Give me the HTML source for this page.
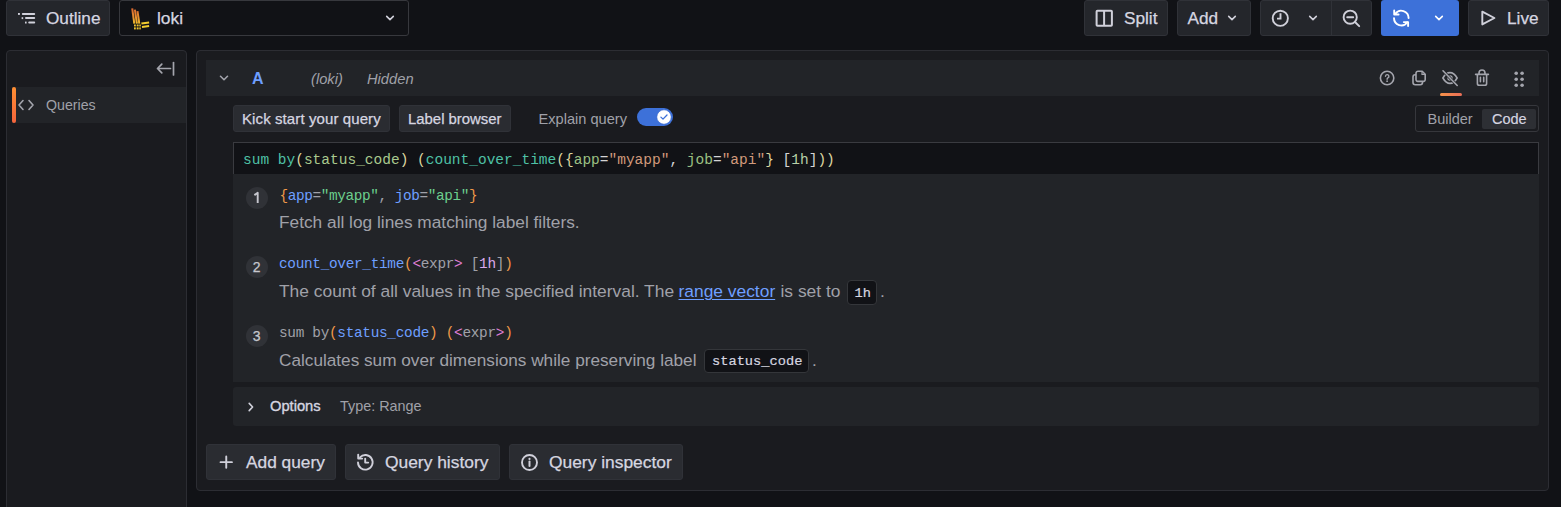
<!DOCTYPE html>
<html><head><meta charset="utf-8"><title>Explore</title><style>
html,body{margin:0;padding:0;}
body{width:1561px;height:507px;overflow:hidden;background:#111216;position:relative;font-family:'Liberation Sans', sans-serif;}
.t{position:absolute;white-space:pre;}
.r{position:absolute;}
</style></head><body>
<div class="r" style="left:6px;top:0px;width:104px;height:36px;background:#24262b;border:1px solid #303238;border-radius:3px;box-sizing:border-box;"></div>
<svg class="r" style="left:18px;top:12px;" width="18" height="12" viewBox="0 0 18 12" fill="none"><g stroke="#d0d0da" stroke-width="2" stroke-linecap="round"><path d="M4.8 2H16.2M8 6.1H16.2M11.2 10.5H16.2"/></g><g fill="#d0d0da"><rect x="0" y="1" width="1.9" height="1.9"/><rect x="3.6" y="5.2" width="1.6" height="1.9"/><rect x="7" y="9.6" width="1.6" height="1.9"/></g></svg>
<div class="t" style="left:46px;top:8px;font-family:'Liberation Sans', sans-serif;font-size:17.2px;line-height:20px;font-weight:400;font-style:normal;color:#d6d6e0;letter-spacing:0px;-webkit-text-stroke:0.25px currentColor;">Outline</div>
<div class="r" style="left:119px;top:0px;width:290px;height:36px;background:#111216;border:1px solid #37383d;border-radius:3px;box-sizing:border-box;"></div>
<svg class="r" style="left:128px;top:5px;" width="24" height="28" viewBox="0 0 24 28" fill="none"><defs><linearGradient id="lg" gradientUnits="userSpaceOnUse" x1="0" y1="3" x2="0" y2="19"><stop offset="0" stop-color="#d9652f"/><stop offset="0.6" stop-color="#e8912f"/><stop offset="1" stop-color="#f3c02b"/></linearGradient></defs><g stroke="url(#lg)" stroke-width="2"><path d="M4.2 3.4L6.3 18.6"/><path d="M6.9 4.6L8.9 18.6"/><path d="M9.5 6.1L11.3 18.6"/></g><g fill="#f2c52c"><rect x="6" y="19.5" width="1.8" height="1.9"/><rect x="8.7" y="19.5" width="1.9" height="1.9"/><rect x="11.3" y="19.5" width="1.5" height="1.9"/><rect x="6" y="22.4" width="1.8" height="2"/><rect x="8.7" y="22.4" width="1.9" height="2"/><rect x="11.3" y="22.4" width="1.5" height="2"/></g><g stroke="#f3cd2e" stroke-width="2"><path d="M13.4 18.6L21.1 17.6"/><path d="M14 21.9L21.1 20.9"/></g></svg>
<div class="t" style="left:157px;top:8px;font-family:'Liberation Sans', sans-serif;font-size:17.4px;line-height:20px;font-weight:400;font-style:normal;color:#d6d6e0;letter-spacing:0px;-webkit-text-stroke:0.25px currentColor;">loki</div>
<svg class="r" style="left:384px;top:14px;" width="12" height="8" viewBox="0 0 12 8" fill="none"><path d="M2.7 2.4L6 5.6L9.3 2.4" stroke="#d0d0da" stroke-width="1.6" stroke-linecap="round" stroke-linejoin="round"/></svg>
<div class="r" style="left:1084px;top:0px;width:84px;height:36px;background:#24262b;border:1px solid #303238;border-radius:3px;box-sizing:border-box;"></div>
<svg class="r" style="left:1095px;top:9px;" width="19" height="19" viewBox="0 0 19 19" fill="none"><rect x="1.6" y="1.8" width="15.3" height="15" rx="0.8" stroke="#d0d0da" stroke-width="2"/><path d="M9.1 1.8V16.8" stroke="#d0d0da" stroke-width="2"/></svg>
<div class="t" style="left:1124px;top:8px;font-family:'Liberation Sans', sans-serif;font-size:17.2px;line-height:20px;font-weight:400;font-style:normal;color:#d6d6e0;letter-spacing:0px;-webkit-text-stroke:0.25px currentColor;">Split</div>
<div class="r" style="left:1177px;top:0px;width:74px;height:36px;background:#24262b;border:1px solid #303238;border-radius:3px;box-sizing:border-box;"></div>
<div class="t" style="left:1187.5px;top:8px;font-family:'Liberation Sans', sans-serif;font-size:17.2px;line-height:20px;font-weight:400;font-style:normal;color:#d6d6e0;letter-spacing:0px;-webkit-text-stroke:0.25px currentColor;">Add</div>
<svg class="r" style="left:1226px;top:14px;" width="12" height="8" viewBox="0 0 12 8" fill="none"><path d="M2.7 2.4L6 5.6L9.3 2.4" stroke="#d0d0da" stroke-width="1.6" stroke-linecap="round" stroke-linejoin="round"/></svg>
<div class="r" style="left:1260px;top:0px;width:112px;height:36px;background:#24262b;border:1px solid #303238;border-radius:3px;box-sizing:border-box;"></div>
<div class="r" style="left:1331px;top:0px;width:1px;height:36px;background:#303238;border-radius:0px;box-sizing:border-box;"></div>
<svg class="r" style="left:1271px;top:9px;" width="19" height="19" viewBox="0 0 19 19" fill="none"><circle cx="9.3" cy="9.3" r="7.6" stroke="#d0d0da" stroke-width="1.9"/><path d="M9.5 4.3V9.6H6" stroke="#d0d0da" stroke-width="1.9" stroke-linejoin="miter"/></svg>
<svg class="r" style="left:1307px;top:14px;" width="12" height="8" viewBox="0 0 12 8" fill="none"><path d="M2.7 2.4L6 5.6L9.3 2.4" stroke="#d0d0da" stroke-width="1.6" stroke-linecap="round" stroke-linejoin="round"/></svg>
<svg class="r" style="left:1342px;top:9px;" width="19" height="19" viewBox="0 0 19 19" fill="none"><circle cx="8.2" cy="8.2" r="6.6" stroke="#d0d0da" stroke-width="1.9"/><path d="M5.2 8.2H11.2M13 13L17.2 17.2" stroke="#d0d0da" stroke-width="1.9" stroke-linecap="round"/></svg>
<div class="r" style="left:1381px;top:0px;width:78px;height:36px;background:#3d71d9;border-radius:3px;box-sizing:border-box;"></div>
<svg class="r" style="left:1391px;top:8px;" width="20" height="20" viewBox="0 0 20 20" fill="none"><path d="M4.3 5.9A7.3 7.3 0 0 1 17.6 10.1M3 10.1A7.3 7.3 0 0 0 16.3 14.3" stroke="#fff" stroke-width="1.9" stroke-linecap="round"/><path d="M3.2 2.4V6.5H7.6M12.8 14.1H17.1V18" stroke="#fff" stroke-width="1.9" stroke-linecap="round" stroke-linejoin="round"/></svg>
<svg class="r" style="left:1433px;top:14px;" width="12" height="8" viewBox="0 0 12 8" fill="none"><path d="M2.7 2.4L6 5.6L9.3 2.4" stroke="#ffffff" stroke-width="1.6" stroke-linecap="round" stroke-linejoin="round"/></svg>
<div class="r" style="left:1468px;top:0px;width:81px;height:36px;background:#24262b;border:1px solid #303238;border-radius:3px;box-sizing:border-box;"></div>
<svg class="r" style="left:1480px;top:9px;" width="17" height="18" viewBox="0 0 17 18" fill="none"><path d="M2.3 2.6L14.4 9L2.3 15.4Z" stroke="#d0d0da" stroke-width="1.9" stroke-linejoin="round"/></svg>
<div class="t" style="left:1507px;top:8px;font-family:'Liberation Sans', sans-serif;font-size:17.2px;line-height:20px;font-weight:400;font-style:normal;color:#d6d6e0;letter-spacing:0px;-webkit-text-stroke:0.25px currentColor;">Live</div>
<div class="r" style="left:6px;top:50px;width:181px;height:480px;background:#1a1b1f;border:1px solid #2c2d33;border-radius:4px;box-sizing:border-box;"></div>
<svg class="r" style="left:155px;top:61px;" width="21" height="16" viewBox="0 0 21 16" fill="none"><path d="M2.5 7.5H15.5M6.8 3.2L2.5 7.5L6.8 11.8" stroke="#a4a5ad" stroke-width="1.7" stroke-linecap="round" stroke-linejoin="round"/><path d="M18.5 1.5V14" stroke="#a4a5ad" stroke-width="1.7" stroke-linecap="round"/></svg>
<div class="r" style="left:12px;top:87px;width:174px;height:36px;background:#222428;border-radius:0px;box-sizing:border-box;"></div>
<div class="r" style="left:12px;top:87px;width:4px;height:36px;background:linear-gradient(#ff8f33,#f4643c);border-radius:2px;box-sizing:border-box;"></div>
<svg class="r" style="left:17px;top:99px;" width="18" height="12" viewBox="0 0 18 12" fill="none"><path d="M6 1.5L2 6L6 10.5M12 1.5L16 6L12 10.5" stroke="#a4a5ad" stroke-width="1.6" stroke-linecap="round" stroke-linejoin="round"/></svg>
<div class="t" style="left:46px;top:97px;font-family:'Liberation Sans', sans-serif;font-size:14.2px;line-height:16px;font-weight:400;font-style:normal;color:#a0a1a9;letter-spacing:0px;">Queries</div>
<div class="r" style="left:196px;top:50px;width:1353px;height:441px;background:#1a1b1f;border:1px solid #2c2d33;border-radius:4px;box-sizing:border-box;"></div>
<div class="r" style="left:206px;top:60px;width:1333px;height:36px;background:#222428;border-radius:0px;box-sizing:border-box;"></div>
<svg class="r" style="left:218px;top:74px;" width="12" height="9" viewBox="0 0 12 9" fill="none"><path d="M2.5 2.3L6 5.7L9.5 2.3" stroke="#a4a5ad" stroke-width="1.6" stroke-linecap="round" stroke-linejoin="round"/></svg>
<div class="t" style="left:252px;top:70px;font-family:'Liberation Sans', sans-serif;font-size:16px;line-height:17px;font-weight:700;font-style:normal;color:#6e9fff;letter-spacing:0px;">A</div>
<div class="t" style="left:311px;top:71px;font-family:'Liberation Sans', sans-serif;font-size:14.7px;line-height:16px;font-weight:400;font-style:italic;color:#a0a1a9;letter-spacing:0px;">(loki)</div>
<div class="t" style="left:367px;top:71px;font-family:'Liberation Sans', sans-serif;font-size:14.7px;line-height:16px;font-weight:400;font-style:italic;color:#a0a1a9;letter-spacing:0px;">Hidden</div>
<svg class="r" style="left:1378px;top:70px;" width="18" height="18" viewBox="0 0 18 18" fill="none"><circle cx="9.1" cy="8" r="6.7" stroke="#a4a5ad" stroke-width="1.6"/><path d="M7.5 6.3A1.7 1.7 0 1 1 9.9 7.9C9.4 8.2 9.1 8.5 9.1 9.2" stroke="#a4a5ad" stroke-width="1.4" stroke-linecap="round"/><circle cx="9.1" cy="11.2" r="0.9" fill="#a4a5ad"/></svg>
<svg class="r" style="left:1410px;top:69px;" width="18" height="18" viewBox="0 0 18 18" fill="none"><rect x="3" y="5.8" width="9.5" height="10" rx="2.2" stroke="#a4a5ad" stroke-width="1.6"/><path d="M8 2.2H12.2L15.2 5.2V10.6A1.8 1.8 0 0 1 13.4 12.4H7.8A1.8 1.8 0 0 1 6 10.6V4.2A2 2 0 0 1 8 2.2Z" fill="#222428" stroke="#a4a5ad" stroke-width="1.6" stroke-linejoin="round"/><path d="M12 2.4V5.4H15" stroke="#a4a5ad" stroke-width="1.2"/></svg>
<svg class="r" style="left:1441px;top:69px;" width="18" height="18" viewBox="0 0 18 18" fill="none"><path d="M1.9 9C3.9 5.4 6.4 3.6 9 3.6S14.1 5.4 16.1 9C14.1 12.6 11.6 14.4 9 14.4S3.9 12.6 1.9 9Z" stroke="#a4a5ad" stroke-width="1.6"/><circle cx="9" cy="9" r="2" stroke="#a4a5ad" stroke-width="1.4"/><path d="M2 1.8L16.2 16.5" stroke="#222428" stroke-width="2.8"/><path d="M2 1.8L16.2 16.5" stroke="#a4a5ad" stroke-width="1.6" stroke-linecap="round"/></svg>
<div class="r" style="left:1440px;top:93px;width:22px;height:3px;background:linear-gradient(90deg,#f5924a,#ea6e57);border-radius:2px;box-sizing:border-box;"></div>
<svg class="r" style="left:1474px;top:69px;" width="16" height="18" viewBox="0 0 16 18" fill="none"><path d="M1.6 5.4H14.4" stroke="#a4a5ad" stroke-width="1.6" stroke-linecap="round"/><path d="M5 5.2V4A3 3 0 0 1 11 4V5.2" stroke="#a4a5ad" stroke-width="1.6"/><path d="M3.4 5.4V14.4A1.8 1.8 0 0 0 5.2 16.2H10.8A1.8 1.8 0 0 0 12.6 14.4V5.4" stroke="#a4a5ad" stroke-width="1.6"/><path d="M6.4 8.2V12.8M9.7 8.2V12.8" stroke="#a4a5ad" stroke-width="1.6" stroke-linecap="round"/></svg>
<svg class="r" style="left:1512px;top:70px;" width="14" height="18" viewBox="0 0 14 18" fill="none"><g fill="#a4a5ad"><circle cx="4.2" cy="3.2" r="1.8"/><circle cx="10.1" cy="3.2" r="1.8"/><circle cx="4.2" cy="9.3" r="1.8"/><circle cx="10.1" cy="9.3" r="1.8"/><circle cx="4.2" cy="15.3" r="1.8"/><circle cx="10.1" cy="15.3" r="1.8"/></g></svg>
<div class="r" style="left:233px;top:105px;width:157px;height:27px;background:#2a2c31;border:1px solid #303238;border-radius:3px;box-sizing:border-box;"></div>
<div class="t" style="left:242px;top:110px;font-family:'Liberation Sans', sans-serif;font-size:15px;line-height:17px;font-weight:400;font-style:normal;color:#d6d6e0;letter-spacing:0.1px;-webkit-text-stroke:0.25px currentColor;">Kick start your query</div>
<div class="r" style="left:399px;top:105px;width:112px;height:27px;background:#2a2c31;border:1px solid #303238;border-radius:3px;box-sizing:border-box;"></div>
<div class="t" style="left:408px;top:111px;font-family:'Liberation Sans', sans-serif;font-size:14.9px;line-height:16px;font-weight:400;font-style:normal;color:#d6d6e0;letter-spacing:0px;-webkit-text-stroke:0.25px currentColor;">Label browser</div>
<div class="t" style="left:538.5px;top:111px;font-family:'Liberation Sans', sans-serif;font-size:14.6px;line-height:16px;font-weight:400;font-style:normal;color:#a0a1a9;letter-spacing:0px;">Explain query</div>
<div class="r" style="left:637px;top:108px;width:36px;height:18px;background:#3d71d9;border-radius:9px;box-sizing:border-box;"></div>
<svg class="r" style="left:655px;top:109px;" width="18" height="16" viewBox="0 0 18 16" fill="none"><circle cx="9" cy="8" r="7.2" fill="#fff" stroke="#3567cc" stroke-width="0.6"/><path d="M5.9 8.1L8 10.1L12 6" stroke="#3d71d9" stroke-width="1.3" stroke-linecap="round" stroke-linejoin="round"/></svg>
<div class="r" style="left:1415px;top:105px;width:124px;height:27px;background:transparent;border:1px solid #36373c;border-radius:3px;box-sizing:border-box;"></div>
<div class="r" style="left:1482px;top:109px;width:54px;height:20px;background:#2d2f34;border-radius:2px;box-sizing:border-box;"></div>
<div class="t" style="left:1427.5px;top:111px;font-family:'Liberation Sans', sans-serif;font-size:14.5px;line-height:16px;font-weight:400;font-style:normal;color:#a0a1a9;letter-spacing:0px;">Builder</div>
<div class="t" style="left:1492px;top:111px;font-family:'Liberation Sans', sans-serif;font-size:14.5px;line-height:16px;font-weight:400;font-style:normal;color:#d6d6e0;letter-spacing:0px;-webkit-text-stroke:0.15px currentColor;">Code</div>
<div class="r" style="left:233px;top:142px;width:1306px;height:33px;background:#111216;border:1px solid #3a3b40;border-radius:0px;box-sizing:border-box;"></div>
<div class="t" style="left:243px;top:152px;font-family:'Liberation Mono', monospace;font-size:14.5px;line-height:16px;font-weight:400;font-style:normal;color:#d6d6e0;letter-spacing:0px;"><span style="color:#4fc1a6">sum by</span><span style="color:#dcd6a0">(</span><span style="color:#a9c98e">status_code</span><span style="color:#dcd6a0">)</span> <span style="color:#dcd6a0">(</span><span style="color:#4fc1a6">count_over_time</span><span style="color:#dcd6a0">(</span><span style="color:#dcd6a0">{</span><span style="color:#9cc083">app</span><span style="color:#d4d4d4">=</span><span style="color:#d29a7c">"myapp"</span><span style="color:#d4d4d4">, </span><span style="color:#9cc083">job</span><span style="color:#d4d4d4">=</span><span style="color:#d29a7c">"api"</span><span style="color:#dcd6a0">}</span> <span style="color:#d4d4d4">[</span><span style="color:#b8d0a8">1h</span><span style="color:#d4d4d4">]</span><span style="color:#dcd6a0">))</span></div>
<div class="r" style="left:233px;top:174px;width:1306px;height:208px;background:#222428;border-radius:0px;box-sizing:border-box;"></div>
<div class="r" style="left:246px;top:187px;width:22px;height:22px;background:#303237;border-radius:11px;box-sizing:border-box;"></div>
<svg class="r" style="left:250px;top:190px;" width="12" height="16" viewBox="0 0 12 16" fill="none"><path d="M4.4 5.1L7.7 2.8V13.1" stroke="#c6c7ce" stroke-width="1.9" stroke-linejoin="round"/></svg>
<div class="t" style="left:279.5px;top:187.5px;font-family:'Liberation Mono', monospace;font-size:14.4px;line-height:16px;font-weight:400;font-style:normal;color:#d6d6e0;letter-spacing:-0.4px;"><span style="color:#f0994a">{</span><span style="color:#6e9fff">app</span><span style="color:#a0a1a9">=</span><span style="color:#6ccf8e">"myapp"</span><span style="color:#a0a1a9">, </span><span style="color:#6e9fff">job</span><span style="color:#a0a1a9">=</span><span style="color:#6ccf8e">"api"</span><span style="color:#f0994a">}</span></div>
<div class="t" style="left:279px;top:212px;font-family:'Liberation Sans', sans-serif;font-size:17.3px;line-height:20px;font-weight:400;font-style:normal;color:#a0a1a9;letter-spacing:0px;">Fetch all log lines matching label filters.</div>
<div class="r" style="left:246px;top:256px;width:22px;height:22px;background:#303237;border-radius:11px;box-sizing:border-box;"></div>
<div class="t" style="left:252.8px;top:259px;font-family:'Liberation Sans', sans-serif;font-size:14px;line-height:16px;font-weight:400;font-style:normal;color:#c6c7ce;letter-spacing:0px;-webkit-text-stroke:0.25px currentColor;">2</div>
<div class="t" style="left:279px;top:256.3px;font-family:'Liberation Mono', monospace;font-size:14.4px;line-height:16px;font-weight:400;font-style:normal;color:#d6d6e0;letter-spacing:-0.3px;"><span style="color:#6e9fff">count_over_time</span><span style="color:#f0994a">(</span><span style="color:#e07fd8">&lt;</span><span style="color:#a0a1a9">expr</span><span style="color:#e07fd8">&gt;</span> <span style="color:#a0a1a9">[</span><span style="color:#dca8ee">1h</span><span style="color:#a0a1a9">]</span><span style="color:#f0994a">)</span></div>
<div class="t" style="left:279px;top:280.8px;font-family:'Liberation Sans', sans-serif;font-size:17.4px;line-height:20px;font-weight:400;font-style:normal;color:#a0a1a9;letter-spacing:0px;">The count of all values in the specified interval. The</div>
<div class="t" style="left:678.5px;top:280.8px;font-family:'Liberation Sans', sans-serif;font-size:17.4px;line-height:20px;font-weight:400;font-style:normal;color:#6e9fff;letter-spacing:0px;text-decoration:underline;text-underline-offset:2px;text-decoration-thickness:1px">range vector</div>
<div class="t" style="left:780.5px;top:280.8px;font-family:'Liberation Sans', sans-serif;font-size:17.4px;line-height:20px;font-weight:400;font-style:normal;color:#a0a1a9;letter-spacing:0px;">is set to</div>
<div class="r" style="left:847px;top:280px;width:30px;height:25px;background:#111216;border:1px solid #34363a;border-radius:4px;box-sizing:border-box;"></div>
<div class="t" style="left:854.5px;top:285.5px;font-family:'Liberation Mono', monospace;font-size:13.7px;line-height:15px;font-weight:400;font-style:normal;color:#d6d6e0;letter-spacing:0px;-webkit-text-stroke:0.2px currentColor;">1h</div>
<div class="t" style="left:880px;top:280.8px;font-family:'Liberation Sans', sans-serif;font-size:17.4px;line-height:20px;font-weight:400;font-style:normal;color:#a0a1a9;letter-spacing:0px;">.</div>
<div class="r" style="left:246px;top:325px;width:22px;height:22px;background:#303237;border-radius:11px;box-sizing:border-box;"></div>
<div class="t" style="left:252.8px;top:328px;font-family:'Liberation Sans', sans-serif;font-size:14px;line-height:16px;font-weight:400;font-style:normal;color:#c6c7ce;letter-spacing:0px;-webkit-text-stroke:0.25px currentColor;">3</div>
<div class="t" style="left:279px;top:325.3px;font-family:'Liberation Mono', monospace;font-size:14.4px;line-height:16px;font-weight:400;font-style:normal;color:#d6d6e0;letter-spacing:-0.3px;"><span style="color:#a0a1a9">sum by</span><span style="color:#f0994a">(</span><span style="color:#6e9fff">status_code</span><span style="color:#f0994a">)</span> <span style="color:#f0994a">(</span><span style="color:#e07fd8">&lt;</span><span style="color:#a0a1a9">expr</span><span style="color:#e07fd8">&gt;</span><span style="color:#f0994a">)</span></div>
<div class="t" style="left:279px;top:349.8px;font-family:'Liberation Sans', sans-serif;font-size:17.2px;line-height:20px;font-weight:400;font-style:normal;color:#a0a1a9;letter-spacing:0px;">Calculates sum over dimensions while preserving label</div>
<div class="r" style="left:704px;top:349px;width:105px;height:24px;background:#111216;border:1px solid #34363a;border-radius:4px;box-sizing:border-box;"></div>
<div class="t" style="left:712px;top:354px;font-family:'Liberation Mono', monospace;font-size:13.7px;line-height:15px;font-weight:400;font-style:normal;color:#d6d6e0;letter-spacing:0px;-webkit-text-stroke:0.2px currentColor;">status_code</div>
<div class="t" style="left:812px;top:349.8px;font-family:'Liberation Sans', sans-serif;font-size:17.2px;line-height:20px;font-weight:400;font-style:normal;color:#a0a1a9;letter-spacing:0px;">.</div>
<div class="r" style="left:233px;top:387px;width:1306px;height:39px;background:#222428;border-radius:3px;box-sizing:border-box;"></div>
<svg class="r" style="left:246px;top:401px;" width="10" height="12" viewBox="0 0 10 12" fill="none"><path d="M3.2 2.4L6.6 6L3.2 9.6" stroke="#d0d0da" stroke-width="1.6" stroke-linecap="round" stroke-linejoin="round"/></svg>
<div class="t" style="left:270px;top:397.9px;font-family:'Liberation Sans', sans-serif;font-size:14.7px;line-height:16px;font-weight:400;font-style:normal;color:#d6d6e0;letter-spacing:0px;-webkit-text-stroke:0.35px currentColor;">Options</div>
<div class="t" style="left:340px;top:397.9px;font-family:'Liberation Sans', sans-serif;font-size:14.4px;line-height:16px;font-weight:400;font-style:normal;color:#a0a1a9;letter-spacing:0px;">Type: Range</div>
<div class="r" style="left:206px;top:444px;width:130px;height:36px;background:#2a2c31;border:1px solid #303238;border-radius:3px;box-sizing:border-box;"></div>
<svg class="r" style="left:218px;top:455px;" width="16" height="16" viewBox="0 0 16 16" fill="none"><path d="M8.25 1.45V12.85M2.55 7.15H13.95" stroke="#d0d0da" stroke-width="1.9" stroke-linecap="round"/></svg>
<div class="t" style="left:246px;top:452px;font-family:'Liberation Sans', sans-serif;font-size:17.3px;line-height:20px;font-weight:400;font-style:normal;color:#d6d6e0;letter-spacing:0px;-webkit-text-stroke:0.25px currentColor;">Add query</div>
<div class="r" style="left:345px;top:444px;width:155px;height:36px;background:#2a2c31;border:1px solid #303238;border-radius:3px;box-sizing:border-box;"></div>
<svg class="r" style="left:355px;top:452px;" width="20" height="20" viewBox="0 0 20 20" fill="none"><path d="M5 5.3A7.3 7.3 0 1 1 3 10.4" stroke="#d0d0da" stroke-width="1.9" stroke-linecap="round"/><path d="M3.2 2.6V6.6H7.2" stroke="#d0d0da" stroke-width="1.9" stroke-linecap="round" stroke-linejoin="round"/><path d="M10.2 6.6V10.6H13.2" stroke="#d0d0da" stroke-width="1.9" stroke-linecap="round" stroke-linejoin="round"/></svg>
<div class="t" style="left:385px;top:452px;font-family:'Liberation Sans', sans-serif;font-size:17.4px;line-height:20px;font-weight:400;font-style:normal;color:#d6d6e0;letter-spacing:0px;-webkit-text-stroke:0.25px currentColor;">Query history</div>
<div class="r" style="left:509px;top:444px;width:174px;height:36px;background:#2a2c31;border:1px solid #303238;border-radius:3px;box-sizing:border-box;"></div>
<svg class="r" style="left:519px;top:452px;" width="20" height="20" viewBox="0 0 20 20" fill="none"><circle cx="10.5" cy="10.5" r="7.5" stroke="#d0d0da" stroke-width="1.9"/><path d="M10.5 9.6V14" stroke="#d0d0da" stroke-width="2" stroke-linecap="round"/><circle cx="10.5" cy="6.9" r="1.1" fill="#d0d0da"/></svg>
<div class="t" style="left:549px;top:452px;font-family:'Liberation Sans', sans-serif;font-size:17.4px;line-height:20px;font-weight:400;font-style:normal;color:#d6d6e0;letter-spacing:0px;-webkit-text-stroke:0.25px currentColor;">Query inspector</div>

</body></html>
